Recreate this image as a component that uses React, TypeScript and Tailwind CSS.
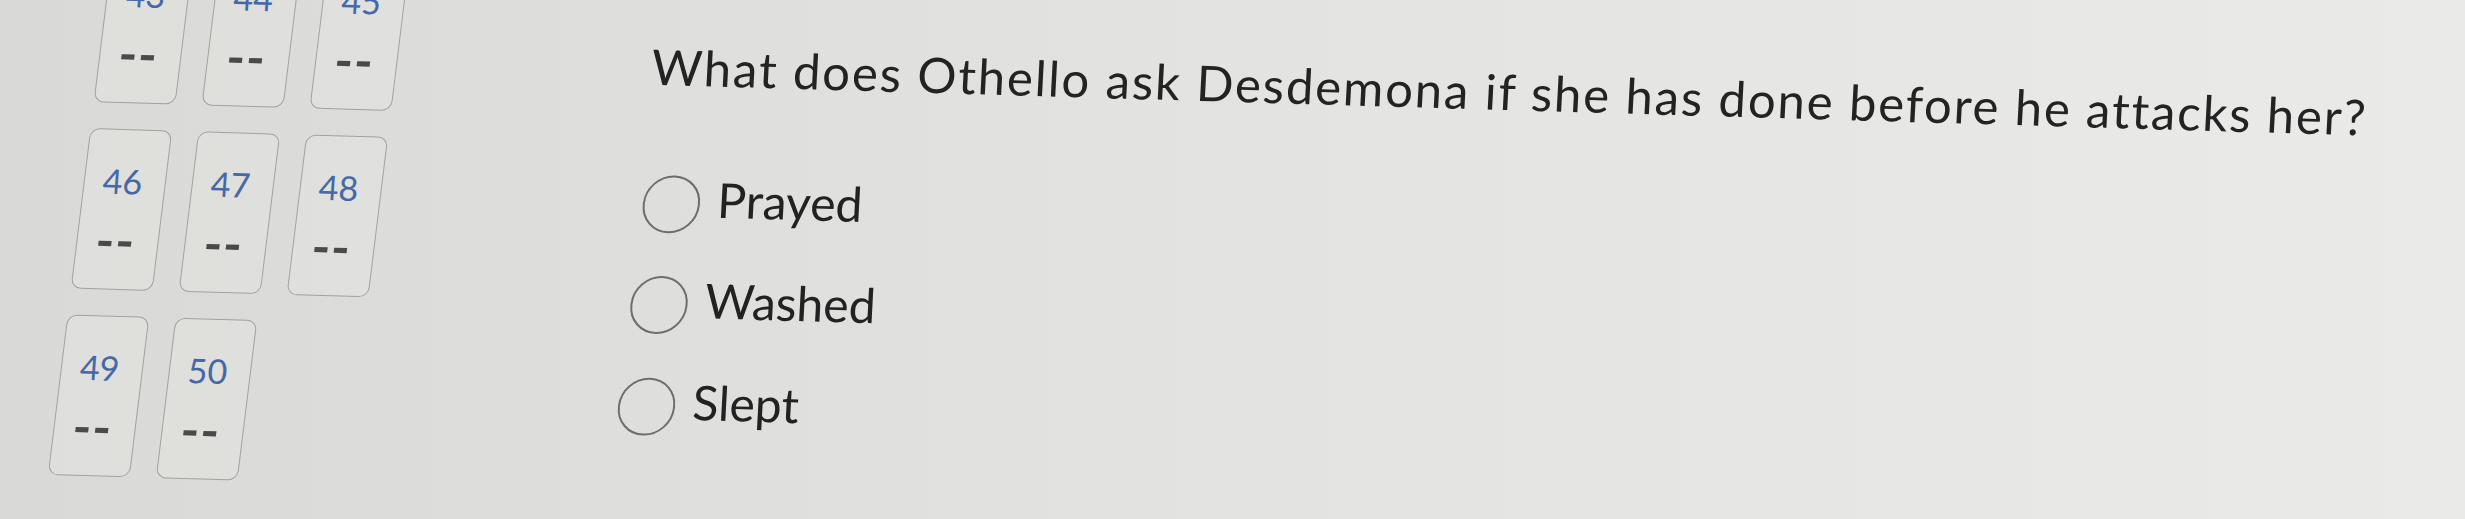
import React from "react";

const questionNumbers = [43, 44, 45, 46, 47, 48, 49, 50];
const choices = ["Prayed", "Washed", "Slept"];

function QuestionTile({ n }: { n: number }) {
  return (
    <div className="flex h-[161px] w-[82px] flex-col items-center rounded-[10px] border-[1.5px] border-[#a2a2a0] bg-[#e6e6e4]/40 pt-[31px] pr-[4px]">
      <span className="skew-x-[3deg] text-[34px] leading-[1.2] text-[#4568a6]">{n}</span>
      <span className="mt-[13px] text-[50px] font-bold leading-none tracking-[1px] text-[#4a4a4a]">--</span>
    </div>
  );
}

function Choice({ label }: { label: string }) {
  return (
    <label className="flex items-center gap-[17px]">
      <span className="h-[58px] w-[57px] shrink-0 rounded-full border-2 border-[#6e6e6e]" />
      <span className="mb-[12px] skew-x-[4deg] text-[48px] leading-none text-[#222222]">{label}</span>
    </label>
  );
}

export default function App() {
  return (
    <div className="h-[519px] w-[2465px] overflow-hidden bg-linear-to-r from-[#d9d9d7] via-[#e3e3e1] to-[#eaeae9] font-['Lato',sans-serif]">
      {/* the page is photographed at an angle */}
      <div className="flex h-full origin-[660px_260px] rotate-[1.7deg] skew-x-[-5.3deg] pl-[76px]">
        <div className="-mt-[42px] grid h-max grid-cols-[repeat(3,82px)] gap-x-[26px] gap-y-[26px]">
          {questionNumbers.map((n) => (
            <QuestionTile key={n} n={n} />
          ))}
        </div>

        <div className="ml-[254px] pt-[37px]">
          <h2 className="skew-x-[4deg] text-[49px] leading-[1.2] tracking-[1.9px] whitespace-nowrap text-[#232323]">
            What does Othello ask Desdemona if she has done before he attacks her?
          </h2>
          <div className="mt-[78px] ml-[8px] flex flex-col gap-[41.5px]">
            {choices.map((c) => (
              <Choice key={c} label={c} />
            ))}
          </div>
        </div>
      </div>
    </div>
  );
}
